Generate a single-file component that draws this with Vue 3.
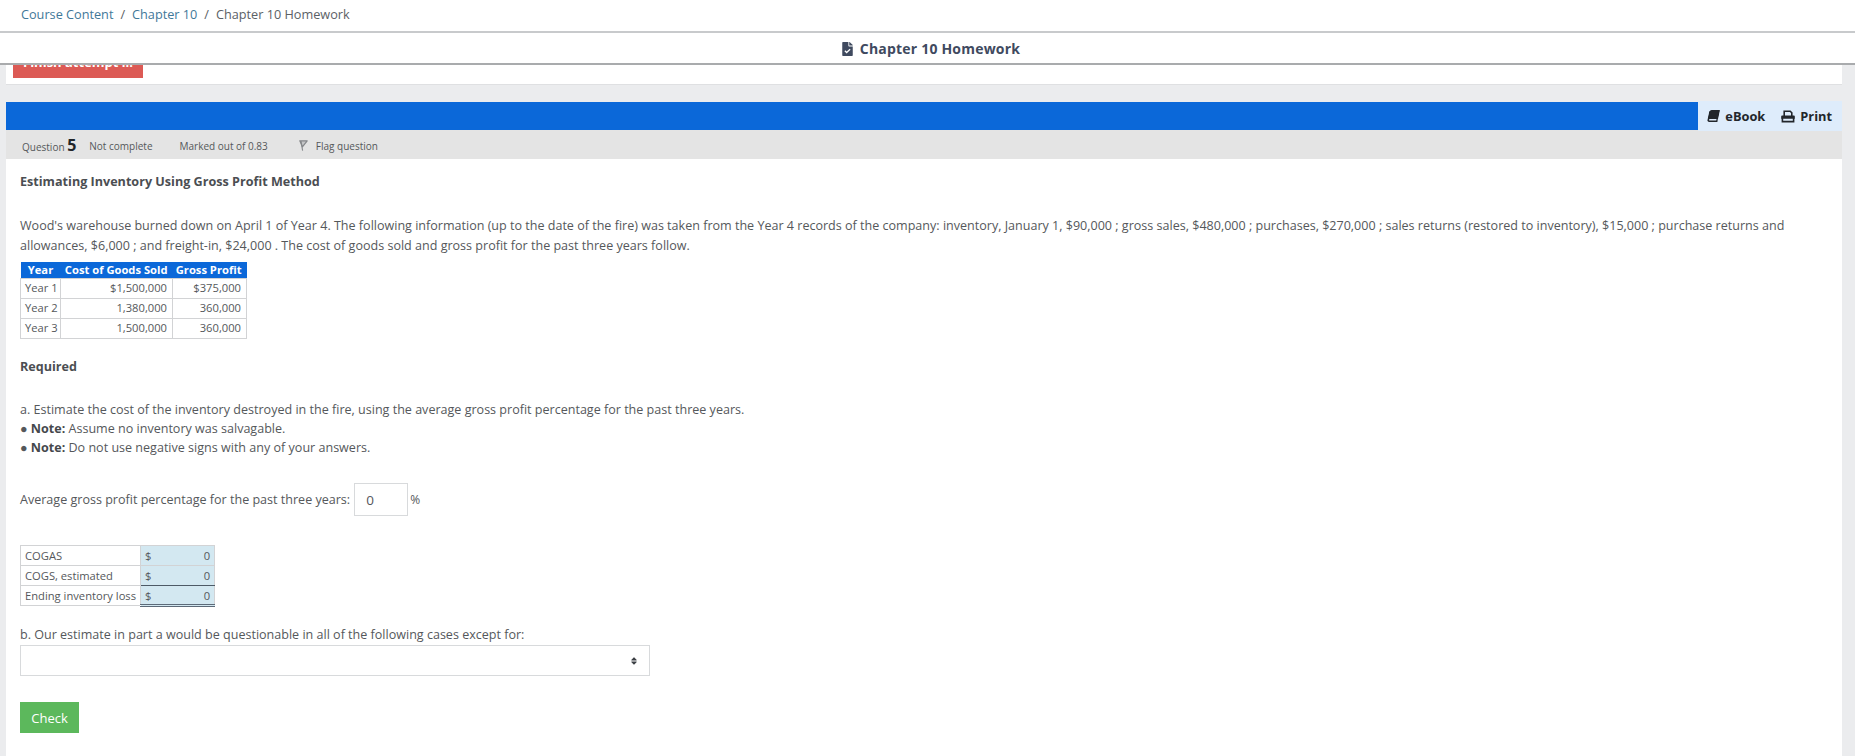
<script setup>
const history = [
  { year: 'Year 1', cogs: '$1,500,000', profit: '$375,000' },
  { year: 'Year 2', cogs: '1,380,000', profit: '360,000' },
  { year: 'Year 3', cogs: '1,500,000', profit: '360,000' },
];

const losses = [
  { label: 'COGAS', cls: '' },
  { label: 'COGS, estimated', cls: 'single' },
  { label: 'Ending inventory loss', cls: 'double' },
];
</script>

<template>
  <div class="page">
    <nav class="crumbs">
      <a>Course Content</a><span class="sep">/</span><a>Chapter 10</a><span class="sep">/</span><span>Chapter 10 Homework</span>
    </nav>

    <header class="title-bar">
      <svg class="title-icon" viewBox="0 0 384 512">
        <path fill="#3f4a5f" d="M224 136V0H24C10.7 0 0 10.7 0 24v464c0 13.3 10.7 24 24 24h336c13.3 0 24-10.7 24-24V160H248c-13.2 0-24-10.8-24-24zm160-14.1V128H256V0h6.1c6.4 0 12.5 2.5 17 7l97.9 98c4.5 4.5 7 10.6 7 16.9z" />
        <path fill="none" stroke="#fff" stroke-width="48" d="M96 320l64 64 128-120" />
      </svg>
      <span>Chapter 10 Homework</span>
    </header>

    <div class="summary-card">
      <button class="finish">Finish attempt ...</button>
    </div>

    <section class="question">
      <div class="tool-bar">
        <div class="tool-fill"></div>
        <div class="tools">
          <span class="tool">
            <svg class="book" viewBox="0 0 448 512">
              <path fill="#22262b" d="M448 360V24c0-13.3-10.7-24-24-24H96C43 0 0 43 0 96v320c0 53 43 96 96 96h328c13.3 0 24-10.7 24-24v-16c0-7.5-3.5-14.3-8.9-18.7-4.2-15.4-4.2-59.3 0-74.7 5.4-4.3 8.9-11.1 8.9-18.6zM381.4 448H96c-17.7 0-32-14.3-32-32 0-17.6 14.4-32 32-32h285.4c-1.9 17.1-1.9 46.9 0 64z" />
            </svg>
            eBook
          </span>
          <span class="tool">
            <svg class="printer" viewBox="0 0 14 13">
              <path fill="none" stroke="#22262b" stroke-width="1.6" d="M3.2 6V1.2h6L10.8 2.8V6M1.4 7.5V11.6h11.2V7.5" />
              <path fill="#22262b" d="M1 5.6h12c.4 0 .8.4.8.8v2.4H.2V6.4c0-.4.4-.8.8-.8z" />
            </svg>
            Print
          </span>
        </div>
      </div>

      <div class="info-bar">
        <span class="q-no">Question <b>5</b></span>
        <span class="q-state">Not complete</span>
        <span class="q-mark">Marked out of 0.83</span>
        <span class="q-flag">
          <svg class="flag" viewBox="0 0 9 11">
            <path fill="#c4c5c7" stroke="#85878a" stroke-width="1.2" stroke-linejoin="round" d="M.8.8h7.4L3.4 6.8z" />
            <path fill="none" stroke="#85878a" stroke-width="1.1" d="M2 1l1.6 9.6" />
          </svg>
          Flag question
        </span>
      </div>

      <div class="body">
        <h4 class="heading">Estimating Inventory Using Gross Profit Method</h4>

        <p class="intro">
          Wood's warehouse burned down on April 1 of Year 4. The following information (up to the date of the fire) was taken from the Year 4 records of the company: inventory, January 1, $90,000 ; gross sales, $480,000 ; purchases, $270,000 ; sales returns (restored to inventory), $15,000 ; purchase returns and allowances, $6,000 ; and freight-in, $24,000 . The cost of goods sold and gross profit for the past three years follow.
        </p>

        <table class="history">
          <thead>
            <tr>
              <th class="c1">Year</th>
              <th class="c2">Cost of Goods Sold</th>
              <th class="c3">Gross Profit</th>
            </tr>
          </thead>
          <tbody>
            <tr v-for="row in history" :key="row.year">
              <td>{{ row.year }}</td>
              <td class="num">{{ row.cogs }}</td>
              <td class="num">{{ row.profit }}</td>
            </tr>
          </tbody>
        </table>

        <h4 class="required">Required</h4>

        <div class="notes">
          <p>a. Estimate the cost of the inventory destroyed in the fire, using the average gross profit percentage for the past three years.</p>
          <p>● <b>Note:</b> Assume no inventory was salvagable.</p>
          <p>● <b>Note:</b> Do not use negative signs with any of your answers.</p>
        </div>

        <div class="avg-row">
          <span>Average gross profit percentage for the past three years:</span>
          <input class="avg-input" value="0" />
          <span class="pct">%</span>
        </div>

        <table class="loss">
          <tbody>
            <tr v-for="row in losses" :key="row.label" :class="row.cls">
              <td class="loss-label">{{ row.label }}</td>
              <td class="loss-value">
                <div class="loss-inner"><span>$</span><span>0</span></div>
              </td>
            </tr>
          </tbody>
        </table>

        <p class="part-b">b. Our estimate in part a would be questionable in all of the following cases except for:</p>

        <div class="select">
          <svg class="sort" viewBox="0 0 320 512">
            <path fill="#3b3f44" d="M41 288h238c21.4 0 32.1 25.9 17 41L177 448c-9.4 9.4-24.6 9.4-33.9 0L24 329c-15.1-15.1-4.4-41 17-41zm255-105L177 64c-9.4-9.4-24.6-9.4-33.9 0L24 183c-15.1 15.1-4.4 41 17 41h238c21.4 0 32.1-25.9 17-41z" />
          </svg>
        </div>

        <button class="check">Check</button>
      </div>
    </section>
  </div>
</template>

<style scoped>
.page {
  height: 756px;
  overflow: hidden;
  background: #ebecee;
  font-family: "Open Sans", sans-serif;
  font-size: 12.55px;
  color: #55585b;
}

.crumbs {
  height: 33px;
  box-sizing: border-box;
  padding: 5px 0 0 21px;
  background: #fff;
  border-bottom: 2px solid #c8cacc;
  line-height: 18px;
  font-size: 12.7px;
  color: #5b6166;
}

.crumbs a {
  color: #3f7899;
}

.sep {
  margin: 0 7px;
}

.title-bar {
  position: relative;
  z-index: 2;
  height: 32px;
  box-sizing: border-box;
  display: flex;
  align-items: center;
  justify-content: center;
  gap: 7px;
  padding: 1px 0 0 7px;
  background: #fff;
  border-bottom: 2px solid #a9abad;
  font-size: 14px;
  font-weight: 700;
  letter-spacing: 0.2px;
  color: #3f4a5f;
}

.title-icon {
  width: 11px;
  height: 14px;
}

.summary-card {
  height: 19px;
  margin: 0 13px 0 6px;
  padding-left: 7px;
  background: #fff;
  border-bottom: 1px solid #dfe0e2;
  overflow: hidden;
}

.finish {
  display: block;
  width: 130px;
  height: 32px;
  margin-top: -19px;
  border: 0;
  background: #dc5a55;
  color: #fff;
  font-family: inherit;
  font-size: 13px;
  font-weight: 700;
}

.question {
  margin: 17px 13px 0 6px;
  background: #fff;
}

.tool-bar {
  display: flex;
  height: 28px;
  background: #0b68d9;
}

.tool-fill {
  flex: 1;
}

.tools {
  width: 144px;
  box-sizing: border-box;
  margin-top: -1px;
  height: 30px;
  padding-right: 10px;
  display: flex;
  justify-content: flex-end;
  align-items: center;
  gap: 16px;
  background: #deecfb;
  font-size: 12.8px;
  font-weight: 700;
  color: #22262b;
}

.tool {
  display: flex;
  align-items: center;
  gap: 5px;
}

.book {
  width: 11px;
  height: 12px;
  margin-right: 1px;
  transform: skewX(-12deg);
}

.printer {
  width: 14px;
  height: 13px;
}

.info-bar {
  height: 29px;
  display: flex;
  align-items: center;
  padding: 2px 0 0 16px;
  box-sizing: border-box;
  background: #e4e4e4;
  font-size: 10px;
  color: #55585b;
}

.q-no b {
  font-size: 16px;
  color: #212529;
  line-height: 1;
}

.q-state {
  margin-left: 13px;
}

.q-mark {
  margin-left: 27px;
}

.q-flag {
  display: flex;
  align-items: center;
  gap: 8px;
  margin-left: 31px;
}

.flag {
  width: 9px;
  height: 11px;
}

.body {
  padding: 14px 14px 0;
  height: 597px;
}

.heading,
.required {
  margin: 0;
  font-size: 12.6px;
  line-height: 18px;
  font-weight: 700;
  color: #4b4e52;
}

.intro {
  margin: 25px 0 0;
  line-height: 20px;
}

.history {
  margin-top: 6px;
  border-collapse: collapse;
  table-layout: fixed;
  width: 226px;
  font-size: 11.2px;
}

.history th {
  height: 16px;
  box-sizing: border-box;
  padding: 0 5px 0 0;
  background: #0b68d9;
  color: #fff;
  font-weight: 700;
  line-height: 16px;
  text-align: right;
  white-space: nowrap;
}

.history th.c1 {
  padding: 0;
  text-align: center;
}

.c1 {
  width: 40px;
}

.c2 {
  width: 112px;
}

.c3 {
  width: 74px;
}

.history td {
  height: 20px;
  box-sizing: border-box;
  padding: 0 5px 2px 4px;
  line-height: 16px;
  white-space: nowrap;
  border: 1px solid #d2d3d5;
}

.history .num {
  text-align: right;
}

.required {
  margin-top: 19px;
}

.notes {
  margin-top: 24px;
  line-height: 19px;
}

.notes p {
  margin: 0;
}

.notes b {
  color: #45484c;
}

.avg-row {
  display: flex;
  align-items: center;
  margin-top: 26px;
}

.avg-input {
  width: 54px;
  height: 33px;
  box-sizing: border-box;
  margin-left: 4px;
  padding: 0 11px;
  border: 1px solid #d8dadc;
  font-family: inherit;
  font-size: 13.5px;
  color: #55585b;
  outline: none;
}

.pct {
  margin-left: 2px;
  font-size: 12px;
}

.loss {
  margin-top: 29px;
  border-collapse: collapse;
  font-size: 11.2px;
}

.loss-label {
  width: 120px;
  height: 20px;
  box-sizing: border-box;
  padding: 0 4px;
  border: 1px solid #d2d3d5;
  white-space: nowrap;
}

.loss-value {
  width: 73px;
  padding: 0;
  background: #d3e8f1;
  border: 1px solid #d2d3d5;
  border-left: 0;
}

.loss-inner {
  display: flex;
  justify-content: space-between;
  padding: 0 4px;
}

.single .loss-value {
  border-bottom: 1px solid #4d5a66;
}

.double .loss-value {
  border-top: 0;
  border-bottom: 3px double #5d6a78;
}

.part-b {
  margin: 19px 0 0;
  line-height: 18px;
}

.select {
  width: 630px;
  height: 31px;
  box-sizing: border-box;
  margin-top: 1px;
  padding-right: 12px;
  display: flex;
  align-items: center;
  justify-content: flex-end;
  border: 1px solid #d8dadc;
  background: #fff;
}

.sort {
  width: 6px;
  height: 10px;
}

.check {
  display: block;
  width: 59px;
  height: 31px;
  margin-top: 26px;
  border: 0;
  background: #5cb85c;
  color: #fff;
  font-family: inherit;
  font-size: 13px;
}
</style>

<style>
html,
body {
  margin: 0;
  overflow: hidden;
}
</style>
